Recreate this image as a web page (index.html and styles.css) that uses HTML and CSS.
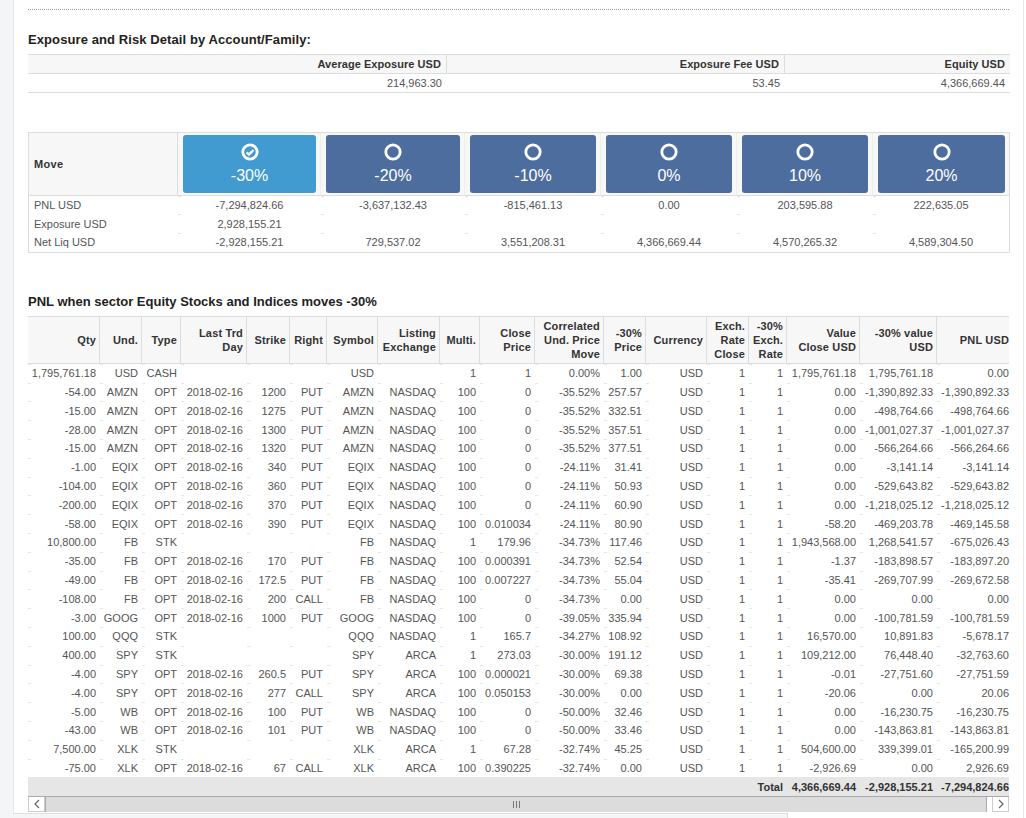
FILE: index.html
```html
<!DOCTYPE html>
<html lang="en">
<head>
<meta charset="utf-8">
<title>Exposure and Risk Detail</title>
<link rel="stylesheet" href="styles.css">
</head>
<body>
<main class="page">
<div class="rule"></div>
<h2 class="title first">Exposure and Risk Detail by Account/Family:</h2>
<table class="summary">
<colgroup><col class="s1"><col class="s2"><col class="s3"></colgroup>
<thead><tr><th>Average Exposure USD</th><th>Exposure Fee USD</th><th>Equity USD</th></tr></thead>
<tbody><tr><td>214,963.30</td><td>53.45</td><td>4,366,669.44</td></tr></tbody>
</table>

<table class="move">
<colgroup><col class="m0"><col class="m1"><col class="m2"><col class="m3"><col class="m3"><col class="m3"><col class="m3"></colgroup>
<thead>
<tr>
<th class="label">Move</th>
<th><div class="btn active"><svg class="ico" viewBox="0 0 18 18"><circle cx="9" cy="9" r="7.2" fill="none" stroke="#fff" stroke-width="2.8"/><path d="M5.6 9.2l2.4 2.4 4.5-4.6" fill="none" stroke="#fff" stroke-width="2.2"/></svg><span>-30%</span></div></th>
<th><div class="btn"><svg class="ico" viewBox="0 0 18 18"><circle cx="9" cy="9" r="7.2" fill="none" stroke="#fff" stroke-width="2.8"/></svg><span>-20%</span></div></th>
<th><div class="btn"><svg class="ico" viewBox="0 0 18 18"><circle cx="9" cy="9" r="7.2" fill="none" stroke="#fff" stroke-width="2.8"/></svg><span>-10%</span></div></th>
<th><div class="btn"><svg class="ico" viewBox="0 0 18 18"><circle cx="9" cy="9" r="7.2" fill="none" stroke="#fff" stroke-width="2.8"/></svg><span>0%</span></div></th>
<th><div class="btn"><svg class="ico" viewBox="0 0 18 18"><circle cx="9" cy="9" r="7.2" fill="none" stroke="#fff" stroke-width="2.8"/></svg><span>10%</span></div></th>
<th><div class="btn"><svg class="ico" viewBox="0 0 18 18"><circle cx="9" cy="9" r="7.2" fill="none" stroke="#fff" stroke-width="2.8"/></svg><span>20%</span></div></th>
</tr>
</thead>
<tbody>
<tr><td class="label">PNL USD</td><td>-7,294,824.66</td><td>-3,637,132.43</td><td>-815,461.13</td><td>0.00</td><td>203,595.88</td><td>222,635.05</td></tr>
<tr><td class="label">Exposure USD</td><td>2,928,155.21</td><td></td><td></td><td></td><td></td><td></td></tr>
<tr><td class="label">Net Liq USD</td><td>-2,928,155.21</td><td>729,537.02</td><td>3,551,208.31</td><td>4,366,669.44</td><td>4,570,265.32</td><td>4,589,304.50</td></tr>
</tbody>
</table>

<h2 class="title second">PNL when sector Equity Stocks and Indices moves -30%</h2>
<div class="scroller">
<table class="pnl">
<colgroup><col class="c72"><col class="c42"><col class="c39"><col class="c66"><col class="c43"><col class="c37"><col class="c51"><col class="c62"><col class="c40"><col class="c55"><col class="c69"><col class="c42"><col class="c61"><col class="c42"><col class="c38"><col class="c73"><col class="c77"><col class="c72"></colgroup>
<thead><tr><th>Qty</th><th>Und.</th><th>Type</th><th>Last Trd Day</th><th>Strike</th><th>Right</th><th>Symbol</th><th>Listing Exchange</th><th>Multi.</th><th>Close Price</th><th>Correlated Und. Price Move</th><th>-30% Price</th><th>Currency</th><th>Exch. Rate Close</th><th>-30% Exch. Rate</th><th>Value<br>Close USD</th><th>-30% value USD</th><th>PNL USD</th></tr></thead>
<tbody>
<tr><td>1,795,761.18</td><td>USD</td><td>CASH</td><td></td><td></td><td></td><td>USD</td><td></td><td>1</td><td>1</td><td>0.00%</td><td>1.00</td><td>USD</td><td>1</td><td>1</td><td>1,795,761.18</td><td>1,795,761.18</td><td>0.00</td></tr>
<tr><td>-54.00</td><td>AMZN</td><td>OPT</td><td>2018-02-16</td><td>1200</td><td>PUT</td><td>AMZN</td><td>NASDAQ</td><td>100</td><td>0</td><td>-35.52%</td><td>257.57</td><td>USD</td><td>1</td><td>1</td><td>0.00</td><td>-1,390,892.33</td><td>-1,390,892.33</td></tr>
<tr><td>-15.00</td><td>AMZN</td><td>OPT</td><td>2018-02-16</td><td>1275</td><td>PUT</td><td>AMZN</td><td>NASDAQ</td><td>100</td><td>0</td><td>-35.52%</td><td>332.51</td><td>USD</td><td>1</td><td>1</td><td>0.00</td><td>-498,764.66</td><td>-498,764.66</td></tr>
<tr><td>-28.00</td><td>AMZN</td><td>OPT</td><td>2018-02-16</td><td>1300</td><td>PUT</td><td>AMZN</td><td>NASDAQ</td><td>100</td><td>0</td><td>-35.52%</td><td>357.51</td><td>USD</td><td>1</td><td>1</td><td>0.00</td><td>-1,001,027.37</td><td>-1,001,027.37</td></tr>
<tr><td>-15.00</td><td>AMZN</td><td>OPT</td><td>2018-02-16</td><td>1320</td><td>PUT</td><td>AMZN</td><td>NASDAQ</td><td>100</td><td>0</td><td>-35.52%</td><td>377.51</td><td>USD</td><td>1</td><td>1</td><td>0.00</td><td>-566,264.66</td><td>-566,264.66</td></tr>
<tr><td>-1.00</td><td>EQIX</td><td>OPT</td><td>2018-02-16</td><td>340</td><td>PUT</td><td>EQIX</td><td>NASDAQ</td><td>100</td><td>0</td><td>-24.11%</td><td>31.41</td><td>USD</td><td>1</td><td>1</td><td>0.00</td><td>-3,141.14</td><td>-3,141.14</td></tr>
<tr><td>-104.00</td><td>EQIX</td><td>OPT</td><td>2018-02-16</td><td>360</td><td>PUT</td><td>EQIX</td><td>NASDAQ</td><td>100</td><td>0</td><td>-24.11%</td><td>50.93</td><td>USD</td><td>1</td><td>1</td><td>0.00</td><td>-529,643.82</td><td>-529,643.82</td></tr>
<tr><td>-200.00</td><td>EQIX</td><td>OPT</td><td>2018-02-16</td><td>370</td><td>PUT</td><td>EQIX</td><td>NASDAQ</td><td>100</td><td>0</td><td>-24.11%</td><td>60.90</td><td>USD</td><td>1</td><td>1</td><td>0.00</td><td>-1,218,025.12</td><td>-1,218,025.12</td></tr>
<tr><td>-58.00</td><td>EQIX</td><td>OPT</td><td>2018-02-16</td><td>390</td><td>PUT</td><td>EQIX</td><td>NASDAQ</td><td>100</td><td>0.010034</td><td>-24.11%</td><td>80.90</td><td>USD</td><td>1</td><td>1</td><td>-58.20</td><td>-469,203.78</td><td>-469,145.58</td></tr>
<tr><td>10,800.00</td><td>FB</td><td>STK</td><td></td><td></td><td></td><td>FB</td><td>NASDAQ</td><td>1</td><td>179.96</td><td>-34.73%</td><td>117.46</td><td>USD</td><td>1</td><td>1</td><td>1,943,568.00</td><td>1,268,541.57</td><td>-675,026.43</td></tr>
<tr><td>-35.00</td><td>FB</td><td>OPT</td><td>2018-02-16</td><td>170</td><td>PUT</td><td>FB</td><td>NASDAQ</td><td>100</td><td>0.000391</td><td>-34.73%</td><td>52.54</td><td>USD</td><td>1</td><td>1</td><td>-1.37</td><td>-183,898.57</td><td>-183,897.20</td></tr>
<tr><td>-49.00</td><td>FB</td><td>OPT</td><td>2018-02-16</td><td>172.5</td><td>PUT</td><td>FB</td><td>NASDAQ</td><td>100</td><td>0.007227</td><td>-34.73%</td><td>55.04</td><td>USD</td><td>1</td><td>1</td><td>-35.41</td><td>-269,707.99</td><td>-269,672.58</td></tr>
<tr><td>-108.00</td><td>FB</td><td>OPT</td><td>2018-02-16</td><td>200</td><td>CALL</td><td>FB</td><td>NASDAQ</td><td>100</td><td>0</td><td>-34.73%</td><td>0.00</td><td>USD</td><td>1</td><td>1</td><td>0.00</td><td>0.00</td><td>0.00</td></tr>
<tr><td>-3.00</td><td>GOOG</td><td>OPT</td><td>2018-02-16</td><td>1000</td><td>PUT</td><td>GOOG</td><td>NASDAQ</td><td>100</td><td>0</td><td>-39.05%</td><td>335.94</td><td>USD</td><td>1</td><td>1</td><td>0.00</td><td>-100,781.59</td><td>-100,781.59</td></tr>
<tr><td>100.00</td><td>QQQ</td><td>STK</td><td></td><td></td><td></td><td>QQQ</td><td>NASDAQ</td><td>1</td><td>165.7</td><td>-34.27%</td><td>108.92</td><td>USD</td><td>1</td><td>1</td><td>16,570.00</td><td>10,891.83</td><td>-5,678.17</td></tr>
<tr><td>400.00</td><td>SPY</td><td>STK</td><td></td><td></td><td></td><td>SPY</td><td>ARCA</td><td>1</td><td>273.03</td><td>-30.00%</td><td>191.12</td><td>USD</td><td>1</td><td>1</td><td>109,212.00</td><td>76,448.40</td><td>-32,763.60</td></tr>
<tr><td>-4.00</td><td>SPY</td><td>OPT</td><td>2018-02-16</td><td>260.5</td><td>PUT</td><td>SPY</td><td>ARCA</td><td>100</td><td>0.000021</td><td>-30.00%</td><td>69.38</td><td>USD</td><td>1</td><td>1</td><td>-0.01</td><td>-27,751.60</td><td>-27,751.59</td></tr>
<tr><td>-4.00</td><td>SPY</td><td>OPT</td><td>2018-02-16</td><td>277</td><td>CALL</td><td>SPY</td><td>ARCA</td><td>100</td><td>0.050153</td><td>-30.00%</td><td>0.00</td><td>USD</td><td>1</td><td>1</td><td>-20.06</td><td>0.00</td><td>20.06</td></tr>
<tr><td>-5.00</td><td>WB</td><td>OPT</td><td>2018-02-16</td><td>100</td><td>PUT</td><td>WB</td><td>NASDAQ</td><td>100</td><td>0</td><td>-50.00%</td><td>32.46</td><td>USD</td><td>1</td><td>1</td><td>0.00</td><td>-16,230.75</td><td>-16,230.75</td></tr>
<tr><td>-43.00</td><td>WB</td><td>OPT</td><td>2018-02-16</td><td>101</td><td>PUT</td><td>WB</td><td>NASDAQ</td><td>100</td><td>0</td><td>-50.00%</td><td>33.46</td><td>USD</td><td>1</td><td>1</td><td>0.00</td><td>-143,863.81</td><td>-143,863.81</td></tr>
<tr><td>7,500.00</td><td>XLK</td><td>STK</td><td></td><td></td><td></td><td>XLK</td><td>ARCA</td><td>1</td><td>67.28</td><td>-32.74%</td><td>45.25</td><td>USD</td><td>1</td><td>1</td><td>504,600.00</td><td>339,399.01</td><td>-165,200.99</td></tr>
<tr><td>-75.00</td><td>XLK</td><td>OPT</td><td>2018-02-16</td><td>67</td><td>CALL</td><td>XLK</td><td>ARCA</td><td>100</td><td>0.390225</td><td>-32.74%</td><td>0.00</td><td>USD</td><td>1</td><td>1</td><td>-2,926.69</td><td>0.00</td><td>2,926.69</td></tr>
</tbody>
<tfoot><tr><td colspan="15">Total</td><td>4,366,669.44</td><td>-2,928,155.21</td><td>-7,294,824.66</td></tr></tfoot>
</table>
<div class="scrollbar">
<div class="arrow"><svg viewBox="0 0 8 10" class="chev"><path d="M6 1L2 5l4 4" fill="none" stroke="#666" stroke-width="1.2"/></svg></div>
<div class="thumb"><span class="grip"></span></div>
<div class="gap"></div>
<div class="arrow"><svg viewBox="0 0 8 10" class="chev"><path d="M2 1l4 4-4 4" fill="none" stroke="#666" stroke-width="1.2"/></svg></div>
</div>
</div>
<div class="footer-strip"></div>
</main>
</body>
</html>
```
FILE: styles.css
```css
* { box-sizing: border-box; }
html, body { margin: 0; padding: 0; height: 818px; overflow: hidden; }
body {
  background: #fff;
  font-family: "Liberation Sans", Arial, sans-serif;
  font-size: 11px;
  color: #555;
}
.page {
  position: relative;
  margin-left: 13px;
  width: 1011px;
  height: 818px;
  padding: 9px 14px 0 14px;
  background: #fff;
  border-left: 1px solid #e8e8e8;
  border-right: 1px solid #e8e8e8;
  box-shadow: -13px 0 0 #f4f5f7;
}
.rule { border-top: 1px dotted #999; height: 1px; }
.title {
  margin: 0;
  font-size: 13px;
  line-height: 16px;
  font-weight: bold;
  color: #222;
}
.title.first { margin: 22px 0 6px; letter-spacing: .09px; }
.title.second { margin: 41px 0 6px; letter-spacing: 0; }
table { border-collapse: separate; border-spacing: 0; table-layout: fixed; width: 981px; }
th, td { padding: 0 5px; font-size: 11px; }
.summary { width: 982px; }
.s1 { width: 419px; } .s2 { width: 338px; } .s3 { width: 225px; }
.summary th {
  height: 20px; text-align: right; color: #333; background: #f7f7f7;
  border-top: 1px solid #ddd; border-bottom: 1px solid #ddd; border-right: 1px solid #ddd;
  letter-spacing: .05px;
}
.summary th:last-child { border-right: 0; }
.summary td {
  height: 19px; text-align: right;
  border-bottom: 1px solid #ddd;
}
.move { margin-top: 39px; border: 1px solid #ddd; border-bottom: 0; }
.m0 { width: 149px; } .m1 { width: 143px; } .m2 { width: 144px; } .m3 { width: 136px; }
.move thead th { background: #f7f7f7; padding: 2px 4px 2px 5px; border-bottom: 1px solid #ddd; border-right: 1px solid #eee; height: 62px; }
.move thead th:last-child { border-right: 0; }
.move th.label { text-align: left; color: #333; border-right: 1px solid #ddd; letter-spacing: .3px; }
.move td { height: 18.4px; text-align: center; border-bottom: 0; background: linear-gradient(#e6e6e6,#e6e6e6) 0 0 / 3px 1px no-repeat; }
.move tbody tr:last-child td { border-bottom: 1px solid #ddd; height: 20px; }
.move td.label { text-align: left; background: none; }
.btn {
  height: 58px;
  border-radius: 3px;
  background: #4d6d9e;
  color: #fff;
  font-weight: normal;
  font-size: 16px;
  line-height: 18px;
  display: flex;
  flex-direction: column;
  align-items: center;
  padding-top: 8px;
  gap: 6px;
}
.btn.active { background: #419ad0; }
.ico { width: 18px; height: 18px; display: block; }
.scroller { width: 981px; }
.c72 { width: 72px; } .c42 { width: 42px; } .c39 { width: 39px; } .c66 { width: 66px; }
.c43 { width: 43px; } .c37 { width: 37px; } .c51 { width: 51px; } .c62 { width: 62px; }
.c40 { width: 40px; } .c55 { width: 55px; } .c69 { width: 69px; } .c61 { width: 61px; }
.c38 { width: 38px; } .c73 { width: 73px; } .c77 { width: 77px; }
.pnl th {
  height: 48px;
  padding: 0 3px 0 2px;
  text-align: right;
  line-height: 14px;
  color: #333;
  background: #f7f7f7;
  border-top: 1px solid #ddd;
  border-bottom: 1px solid #ddd;
  border-right: 1px solid #ddd;
  letter-spacing: .15px;
}
.pnl th:last-child { border-right: 0; padding-right: 0; }
.pnl td {
  height: 18.8px;
  padding: 0 4px 0 0;
  text-align: right;
  white-space: nowrap;
  line-height: 14px;
  background: linear-gradient(#e6e6e6,#e6e6e6) 0 0 / 3px 1px no-repeat;
}
.pnl td:last-child { padding-right: 0; }
.pnl tfoot td {
  height: 19px;
  background: #e6e6e6;
  color: #333;
  font-weight: bold;
}
.scrollbar {
  display: flex;
  height: 16px;
  border-top: 1px solid #aaa;
  background: #fff;
}
.arrow {
  width: 17px;
  flex: none;
  display: flex;
  align-items: center;
  justify-content: center;
  border: 1px solid #ccc;
  border-top: 0;
  background: #fff;
}
.chev { width: 8px; height: 10px; }
.thumb {
  flex: 1;
  background: #dcdcdc;
  border-left: 1px solid #aaa;
  border-right: 1px solid #aaa;
  display: flex;
  align-items: center;
  justify-content: center;
}
.grip {
  width: 7px; height: 7px;
  background: repeating-linear-gradient(90deg, #777 0 1px, transparent 1px 3px);
}
.gap { width: 5px; flex: none; background: #fff; }
.footer-strip {
  position: absolute;
  left: -1px;
  top: 813px;
  width: 775px;
  height: 5px;
  background: #f4f5f7;
  border-top: 1px solid #dedede;
  border-right: 1px solid #ddd;
}
```
